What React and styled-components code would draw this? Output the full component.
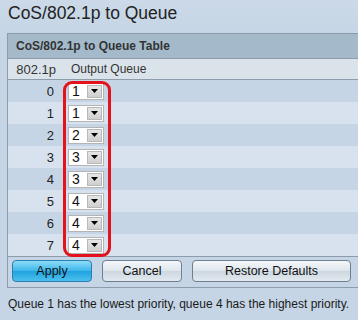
import styled, { createGlobalStyle } from "styled-components";

const mappings = [
  { cos: 0, queue: 1 },
  { cos: 1, queue: 1 },
  { cos: 2, queue: 2 },
  { cos: 3, queue: 3 },
  { cos: 4, queue: 3 },
  { cos: 5, queue: 4 },
  { cos: 6, queue: 4 },
  { cos: 7, queue: 4 },
];

function App() {
  return (
    <>
      <GlobalStyle />
      <Page>
        <Title>CoS/802.1p to Queue</Title>
        <Panel>
          <PanelHeader>CoS/802.1p to Queue Table</PanelHeader>
          <ColumnRow>
            <CosHead>802.1p</CosHead>
            <QueueHead>Output Queue</QueueHead>
          </ColumnRow>
          <Rows>
            {mappings.map((m, i) => (
              <Row key={m.cos} $odd={i % 2 === 1}>
                <CosCell>{m.cos}</CosCell>
                <QueueCell>
                  <Select>
                    <SelectValue>{m.queue}</SelectValue>
                    <SelectButton>
                      <svg width="7" height="4" viewBox="0 0 7 4">
                        <path d="M0 0h7L3.5 4z" fill="#000" />
                      </svg>
                    </SelectButton>
                  </Select>
                </QueueCell>
              </Row>
            ))}
            <Highlight />
          </Rows>
          <ButtonRow>
            <Button $primary $w={80}>Apply</Button>
            <Button $w={80}>Cancel</Button>
            <Button $w={159}>Restore Defaults</Button>
          </ButtonRow>
        </Panel>
        <Note>Queue 1 has the lowest priority, queue 4 has the highest priority.</Note>
      </Page>
    </>
  );
}

const GlobalStyle = createGlobalStyle`
  body {
    margin: 0;
    background: #c5d5e5;
    font-family: "Liberation Sans", Arial, sans-serif;
    color: #1a1a1a;
    overflow: hidden;
  }
`;

const Page = styled.div`
  width: 358px;
  height: 320px;
  overflow: hidden;
  background: linear-gradient(#cbd9e8, #c5d5e5 40px);
`;

const Title = styled.h1`
  margin: 0;
  padding: 3px 0 0 8px;
  height: 33px;
  box-sizing: border-box;
  font-size: 17.5px;
  font-weight: normal;
  color: #222;
`;

const Panel = styled.div`
  margin-left: 7px;
  width: 360px;
  border: 1px solid #8c9cab;
  border-right: none;
  box-sizing: border-box;
`;

const PanelHeader = styled.div`
  height: 24px;
  line-height: 24px;
  padding-left: 8px;
  background: #a4bacb;
  font-size: 12px;
  font-weight: bold;
  color: #333;
  border-bottom: 1px solid #8c9cab;
`;

const ColumnRow = styled.div`
  display: flex;
  height: 20px;
  align-items: center;
  background: #dbe3ea;
  border-bottom: 1px solid #8c9cab;
  font-size: 12px;
  color: #333;
`;

const CosCell = styled.div`
  width: 54px;
  padding-right: 8px;
  box-sizing: border-box;
  text-align: right;
  font-size: 13px;
  color: #222;
`;

const CosHead = styled(CosCell)`
  font-size: 13px;
  padding-right: 6px;
  color: #333;
`;

const QueueHead = styled.div`
  padding-left: 9px;
`;

const Rows = styled.div`
  position: relative;
  border-bottom: 1px solid #8c9cab;
`;

const Row = styled.div`
  display: flex;
  align-items: center;
  height: 22px;
  background: ${(p) => (p.$odd ? "#d7e2ee" : "#c5d5e5")};
`;

const QueueCell = styled.div`
  padding-left: 6px;
`;

const Select = styled.div`
  display: flex;
  width: 36px;
  height: 17px;
  border: 1px solid #b4b4b4;
  background: #fff;
  box-sizing: border-box;
`;

const SelectValue = styled.div`
  flex: 1;
  font-size: 14px;
  line-height: 15px;
  padding-left: 3px;
  color: #111;
`;

const SelectButton = styled.div`
  width: 15px;
  margin: 1px;
  display: flex;
  align-items: center;
  justify-content: center;
  background: linear-gradient(#e6e6e6, #cfcfcf);
  border: 1px solid #b8b8b8;
  box-sizing: border-box;
`;

const Highlight = styled.div`
  position: absolute;
  left: 55px;
  top: 1px;
  width: 48px;
  height: 176px;
  border: 3px solid #e3121c;
  border-radius: 9px;
  box-sizing: border-box;
  pointer-events: none;
`;

const ButtonRow = styled.div`
  display: flex;
  gap: 10px;
  padding: 3px 0 5px 4px;
`;

const Button = styled.button`
  width: ${(p) => p.$w}px;
  height: 22px;
  border-radius: 4px;
  border: 1px solid ${(p) => (p.$primary ? "#2b7fb0" : "#6f7f8c")};
  background: ${(p) =>
    p.$primary
      ? "linear-gradient(#8ddcf8, #3cb6ea 50%, #1fa2e0 51%, #4cc0ee)"
      : "linear-gradient(#f4f7fa, #dde5ec 50%, #cdd7e0 51%, #e2e9ef)"};
  font-family: "Liberation Sans", Arial, sans-serif;
  font-size: 12.5px;
  color: #111;
  padding: 0;
`;

const Note = styled.p`
  margin: 9px 0 0 8px;
  font-size: 12px;
  color: #1a1a1a;
`;

export default App;
